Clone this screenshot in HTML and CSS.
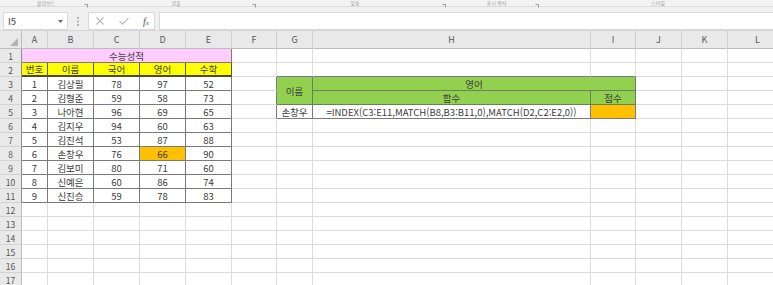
FILE: index.html
```html
<!DOCTYPE html>
<html lang="ko">
<head>
<meta charset="utf-8">
<title>수능성적</title>
<link rel="stylesheet" href="styles.css">
</head>
<body>
<div class="ribbon">
  <div class="grp g1"><span class="lbl">클립보드</span><span class="launch"><svg width="5" height="4" viewBox="0 0 5 4"><path d="M0.5 0.5h3v3" fill="none" stroke="#9a9a9a" stroke-width="1"/></svg></span></div>
  <div class="grp g2"><span class="lbl">글꼴</span><span class="launch"><svg width="5" height="4" viewBox="0 0 5 4"><path d="M0.5 0.5h3v3" fill="none" stroke="#9a9a9a" stroke-width="1"/></svg></span></div>
  <div class="grp g3"><span class="lbl">맞춤</span><span class="launch"><svg width="5" height="4" viewBox="0 0 5 4"><path d="M0.5 0.5h3v3" fill="none" stroke="#9a9a9a" stroke-width="1"/></svg></span></div>
  <div class="grp g4"><span class="lbl">표시 형식</span><span class="launch"><svg width="5" height="4" viewBox="0 0 5 4"><path d="M0.5 0.5h3v3" fill="none" stroke="#9a9a9a" stroke-width="1"/></svg></span></div>
  <div class="grp g5"><span class="lbl">스타일</span><span class="launch"></span></div>
</div>

<div class="fbar">
  <div class="namebox"><span class="ref">I5</span><span class="dd"><svg width="5" height="3" viewBox="0 0 5 3"><path d="M0 0h5L2.5 3z" fill="#6a6a6a"/></svg></span></div>
  <div class="dots"><svg width="2" height="9" viewBox="0 0 2 9"><rect x="0" y="0" width="2" height="2" fill="#b5b5b5"/><rect x="0" y="3.5" width="2" height="2" fill="#b5b5b5"/><rect x="0" y="7" width="2" height="2" fill="#b5b5b5"/></svg></div>
  <div class="fbtns">
    <svg class="ic-x" width="8" height="8" viewBox="0 0 8 8"><path d="M0.5 0.5l7 7M7.5 0.5l-7 7" stroke="#b8b8b8" stroke-width="1.1" fill="none"/></svg>
    <svg class="ic-ok" width="10" height="8" viewBox="0 0 10 8"><path d="M0.5 4.2l3 3L9.5 0.8" stroke="#b8b8b8" stroke-width="1.1" fill="none"/></svg>
    <span class="fx">f<span class="fxx">x</span></span>
  </div>
  <div class="finput"></div>
</div>

<table class="sheet">
  <colgroup>
    <col class="c-rh"><col class="c-a"><col class="c-n"><col class="c-n"><col class="c-n"><col class="c-n">
    <col class="c-f"><col class="c-g"><col class="c-h"><col class="c-i"><col class="c-n"><col class="c-n"><col class="c-l">
  </colgroup>
  <tr class="hdr">
    <th class="corner"><svg width="8" height="8" viewBox="0 0 8 8"><path d="M8 0V8H0z" fill="#b4b4b4"/></svg></th>
    <th>A</th><th>B</th><th>C</th><th>D</th><th>E</th><th>F</th><th>G</th><th>H</th><th>I</th><th>J</th><th>K</th><th>L</th>
  </tr>
  <tr>
    <th class="rh dk">1</th>
    <td colspan="5" class="b pink">수능성적</td>
    <td></td><td></td><td></td><td></td><td></td><td></td><td></td>
  </tr>
  <tr class="yrow">
    <th class="rh dk">2</th>
    <td class="b yel">번호</td><td class="b yel">이름</td><td class="b yel">국어</td><td class="b yel">영어</td><td class="b yel">수학</td>
    <td></td><td class="bb"></td><td class="bb"></td><td class="bb"></td><td></td><td></td><td></td>
  </tr>
  <tr>
    <th class="rh dk">3</th>
    <td class="b">1</td><td class="b">김상필</td><td class="b">78</td><td class="b">97</td><td class="b">52</td>
    <td class="br"></td><td rowspan="2" class="b grn">이름</td><td colspan="2" class="b grn">영어</td><td></td><td></td><td></td>
  </tr>
  <tr>
    <th class="rh dk">4</th>
    <td class="b">2</td><td class="b">김형준</td><td class="b">59</td><td class="b">58</td><td class="b">73</td>
    <td class="br"></td><td class="b grn">함수</td><td class="b grn">점수</td><td></td><td></td><td></td>
  </tr>
  <tr>
    <th class="rh dk">5</th>
    <td class="b">3</td><td class="b">나아현</td><td class="b">96</td><td class="b">69</td><td class="b">65</td>
    <td class="br"></td><td class="b">손창우</td><td class="b">=INDEX(C3:E11,MATCH(B8,B3:B11,0),MATCH(D2,C2:E2,0))</td><td class="b org"></td><td></td><td></td><td></td>
  </tr>
  <tr>
    <th class="rh dk">6</th>
    <td class="b">4</td><td class="b">김지우</td><td class="b">94</td><td class="b">60</td><td class="b">63</td>
    <td></td><td></td><td></td><td></td><td></td><td></td><td></td>
  </tr>
  <tr>
    <th class="rh dk">7</th>
    <td class="b">5</td><td class="b">김진석</td><td class="b">53</td><td class="b">87</td><td class="b">88</td>
    <td></td><td></td><td></td><td></td><td></td><td></td><td></td>
  </tr>
  <tr>
    <th class="rh dk">8</th>
    <td class="b">6</td><td class="b">손창우</td><td class="b">76</td><td class="b org">66</td><td class="b">90</td>
    <td></td><td></td><td></td><td></td><td></td><td></td><td></td>
  </tr>
  <tr>
    <th class="rh dk">9</th>
    <td class="b">7</td><td class="b">김보미</td><td class="b">80</td><td class="b">71</td><td class="b">60</td>
    <td></td><td></td><td></td><td></td><td></td><td></td><td></td>
  </tr>
  <tr>
    <th class="rh dk">10</th>
    <td class="b">8</td><td class="b">신예은</td><td class="b">60</td><td class="b">86</td><td class="b">74</td>
    <td></td><td></td><td></td><td></td><td></td><td></td><td></td>
  </tr>
  <tr>
    <th class="rh dk">11</th>
    <td class="b">9</td><td class="b">신진승</td><td class="b">59</td><td class="b">78</td><td class="b">83</td>
    <td></td><td></td><td></td><td></td><td></td><td></td><td></td>
  </tr>
  <tr><th class="rh">12</th><td></td><td></td><td></td><td></td><td></td><td></td><td></td><td></td><td></td><td></td><td></td><td></td></tr>
  <tr><th class="rh">13</th><td></td><td></td><td></td><td></td><td></td><td></td><td></td><td></td><td></td><td></td><td></td><td></td></tr>
  <tr><th class="rh">14</th><td></td><td></td><td></td><td></td><td></td><td></td><td></td><td></td><td></td><td></td><td></td><td></td></tr>
  <tr><th class="rh">15</th><td></td><td></td><td></td><td></td><td></td><td></td><td></td><td></td><td></td><td></td><td></td><td></td></tr>
  <tr><th class="rh">16</th><td></td><td></td><td></td><td></td><td></td><td></td><td></td><td></td><td></td><td></td><td></td><td></td></tr>
  <tr><th class="rh">17</th><td></td><td></td><td></td><td></td><td></td><td></td><td></td><td></td><td></td><td></td><td></td><td></td></tr>
</table>
</body>
</html>
```

FILE: styles.css
```css
html, body {
  margin: 0;
  padding: 0;
  background: #ffffff;
  overflow: hidden;
}
body {
  width: 773px;
  height: 285px;
  font-family: "Noto Sans CJK KR", "Noto Sans", sans-serif;
  color: #3a3a3a;
}

/* ribbon remnant */
.ribbon {
  display: flex;
  height: 6px;
  background: #f3f3f3;
  border-bottom: 1px solid #dedede;
}
.grp {
  display: grid;
  grid-template-columns: 1fr auto 1fr;
  align-items: end;
  height: 6px;
}
.g1 { width: 92px; }
.g2 { width: 168px; }
.g3 { width: 190px; }
.g4 { width: 93px; }
.g5 { flex: 1; }
.lbl {
  grid-column: 2;
  font-size: 5px;
  line-height: 6px;
  color: #9a9a9a;
  white-space: nowrap;
}
.launch {
  grid-column: 3;
  justify-self: end;
  margin-right: 3px;
  height: 5px;
  line-height: 0;
}

/* formula bar */
.fbar {
  display: flex;
  align-items: flex-start;
  height: 24px;
  padding: 5px 0 0 3px;
  box-sizing: border-box;
  background: #f0f0f0;
  border-bottom: 1px solid #d6d6d6;
}
.namebox {
  width: 65px;
  height: 18px;
  box-sizing: border-box;
  background: #fff;
  border: 1px solid #d9d9d9;
  display: flex;
  align-items: center;
  justify-content: space-between;
  padding: 0 4px 0 4px;
  font-size: 9.5px;
  color: #444;
}
.dd { line-height: 0; }
.dots {
  width: 20px;
  height: 18px;
  display: flex;
  align-items: center;
  justify-content: center;
}
.fbtns {
  width: 67px;
  height: 18px;
  box-sizing: border-box;
  background: #fff;
  border: 1px solid #d9d9d9;
  display: flex;
  align-items: center;
  padding-left: 7px;
}
.ic-ok { margin-left: 15px; }
.fx {
  margin-left: 14px;
  font-family: "Liberation Serif", serif;
  font-style: italic;
  font-size: 10px;
  color: #555;
}
.fxx { font-size: 7px; }
.finput {
  flex: 1;
  height: 18px;
  margin-left: 4px;
  box-sizing: border-box;
  background: #fff;
  border: 1px solid #d9d9d9;
  border-right: none;
}

/* sheet */
.sheet {
  table-layout: fixed;
  border-collapse: separate;
  border-spacing: 0;
  width: 788px;
  font-size: 9.5px;
}
.c-rh { width: 22px; }
.c-a { width: 26px; }
.c-n { width: 46px; }
.c-f { width: 45px; }
.c-g { width: 36px; }
.c-h { width: 278px; }
.c-i { width: 45px; }
.c-l { width: 60px; }

.sheet tr { height: 14px; }
.sheet tr.hdr { height: 18px; }

.sheet th, .sheet td {
  padding: 0;
  box-sizing: border-box;
  text-align: center;
  vertical-align: middle;
  white-space: nowrap;
  overflow: hidden;
  line-height: 12px;
}
.sheet td {
  border-right: 1px solid #dcdcdc;
  border-bottom: 1px solid #dcdcdc;
  color: #3c3c3c;
}
.hdr th {
  background: #e9e9e9;
  font-weight: normal;
  font-size: 9px;
  color: #555;
  border-right: 1px solid #d0d0d0;
  border-bottom: 1px solid #bcbcbc;
}
.hdr th.corner {
  vertical-align: bottom;
  padding: 0 3px 2px 0;
  border-right: 1px solid #bcbcbc;
}
.corner svg { display: block; margin-left: auto; }

.rh {
  background: #e9e9e9;
  font-weight: normal;
  font-size: 8.5px;
  color: #555;
  border-right: 1px solid #bcbcbc;
  border-bottom: 1px solid #d3d3d3;
}
.rh.dk { border-right-color: #8a8a8a; }

.sheet td.b {
  border-right-color: #7a7a7a;
  border-bottom-color: #7a7a7a;
}
.sheet td.bb { border-bottom-color: #7a7a7a; }
.sheet td.br { border-right-color: #7a7a7a; }

.pink { background: #ffccff; color: #333; }
.yrow td.yel {
  background: #ffff00;
  border-right-color: #5a5a3a;
  border-bottom: 2px solid #4a4a3a;
}
.grn { background: #92d050; color: #333; }
.sheet td.grn { border-right-color: #6b7f5a; border-bottom-color: #6b7f5a; }
.org { background: #ffc000; }
```
